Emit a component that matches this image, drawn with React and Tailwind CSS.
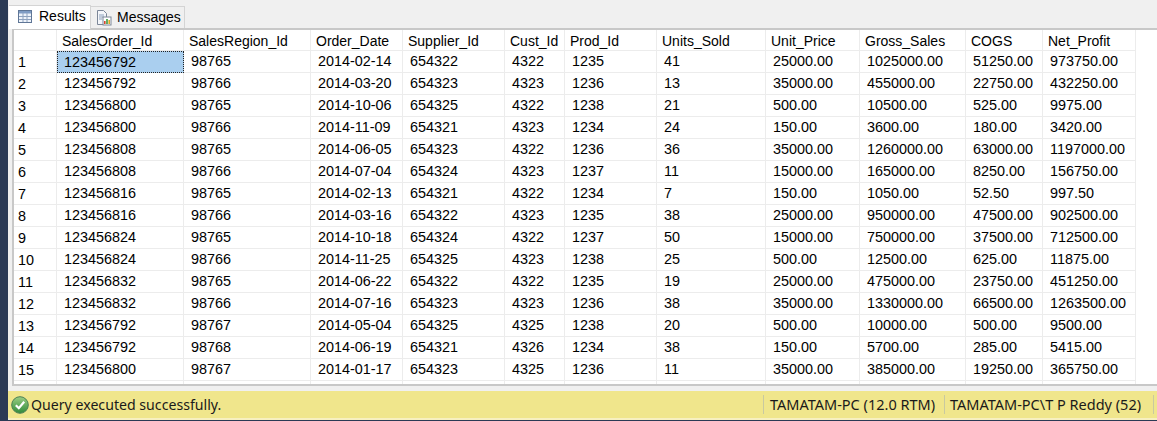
const columns = [
  { name: "", w: 43 },
  { name: "SalesOrder_Id", w: 127 },
  { name: "SalesRegion_Id", w: 127 },
  { name: "Order_Date", w: 92 },
  { name: "Supplier_Id", w: 102 },
  { name: "Cust_Id", w: 60 },
  { name: "Prod_Id", w: 92 },
  { name: "Units_Sold", w: 109 },
  { name: "Unit_Price", w: 94 },
  { name: "Gross_Sales", w: 106 },
  { name: "COGS", w: 77 },
  { name: "Net_Profit", w: 93 },
];

const rows = [
  ["123456792", "98765", "2014-02-14", "654322", "4322", "1235", "41", "25000.00", "1025000.00", "51250.00", "973750.00"],
  ["123456792", "98766", "2014-03-20", "654323", "4323", "1236", "13", "35000.00", "455000.00", "22750.00", "432250.00"],
  ["123456800", "98765", "2014-10-06", "654325", "4322", "1238", "21", "500.00", "10500.00", "525.00", "9975.00"],
  ["123456800", "98766", "2014-11-09", "654321", "4323", "1234", "24", "150.00", "3600.00", "180.00", "3420.00"],
  ["123456808", "98765", "2014-06-05", "654323", "4322", "1236", "36", "35000.00", "1260000.00", "63000.00", "1197000.00"],
  ["123456808", "98766", "2014-07-04", "654324", "4323", "1237", "11", "15000.00", "165000.00", "8250.00", "156750.00"],
  ["123456816", "98765", "2014-02-13", "654321", "4322", "1234", "7", "150.00", "1050.00", "52.50", "997.50"],
  ["123456816", "98766", "2014-03-16", "654322", "4323", "1235", "38", "25000.00", "950000.00", "47500.00", "902500.00"],
  ["123456824", "98765", "2014-10-18", "654324", "4322", "1237", "50", "15000.00", "750000.00", "37500.00", "712500.00"],
  ["123456824", "98766", "2014-11-25", "654325", "4323", "1238", "25", "500.00", "12500.00", "625.00", "11875.00"],
  ["123456832", "98765", "2014-06-22", "654322", "4322", "1235", "19", "25000.00", "475000.00", "23750.00", "451250.00"],
  ["123456832", "98766", "2014-07-16", "654323", "4323", "1236", "38", "35000.00", "1330000.00", "66500.00", "1263500.00"],
  ["123456792", "98767", "2014-05-04", "654325", "4325", "1238", "20", "500.00", "10000.00", "500.00", "9500.00"],
  ["123456792", "98768", "2014-06-19", "654321", "4326", "1234", "38", "150.00", "5700.00", "285.00", "5415.00"],
  ["123456800", "98767", "2014-01-17", "654323", "4325", "1236", "11", "35000.00", "385000.00", "19250.00", "365750.00"],
];

function GridIcon() {
  return (
    <svg width="14" height="13" viewBox="0 0 14 13" className="shrink-0">
      <rect x="0.5" y="0.5" width="13" height="12" fill="#eef3fa" stroke="#5f7696" />
      <rect x="1" y="1" width="12" height="2.5" fill="#7f9cc4" />
      <path d="M1 6.5h12M1 9.5h12M5 3v9M9 3v9" stroke="#8fa3bf" fill="none" />
    </svg>
  );
}

function MessagesIcon() {
  return (
    <svg width="16" height="17" viewBox="0 0 16 17" className="shrink-0">
      <path d="M1.5 1.5h6l3 3v11h-9z" fill="#f4f6fa" stroke="#7c8798" />
      <path d="M3 6h5M3 8h5M3 10h3" stroke="#8ea2bd" />
      <rect x="7" y="8" width="8" height="8" fill="#fff" stroke="#7c8798" />
      <rect x="8" y="12" width="1.6" height="3" fill="#d9482b" />
      <rect x="10.2" y="10" width="1.6" height="5" fill="#3b9a3f" />
      <rect x="12.4" y="11" width="1.6" height="4" fill="#e0a526" />
    </svg>
  );
}

function SuccessIcon() {
  return (
    <svg width="18" height="18" viewBox="0 0 18 18" className="shrink-0">
      <defs>
        <linearGradient id="ok" x1="0" y1="0" x2="0" y2="1">
          <stop offset="0" stopColor="#9ccf84" />
          <stop offset="1" stopColor="#2f8a3a" />
        </linearGradient>
      </defs>
      <circle cx="9" cy="9" r="8.3" fill="url(#ok)" stroke="#4a7f55" />
      <path d="M4.8 9.2l3 3 5.4-6.4" stroke="#fff" strokeWidth="2.2" fill="none" />
    </svg>
  );
}

function Row({ n, row, selected }) {
  return (
    <>
      <div className="h-[22px] pl-[4px] pt-[3px] flex items-center border-r border-b border-[#ececec]">{n}</div>
      {row.map((value, j) => (
        <div
          key={j}
          className={
            selected && j === 0
              ? "h-[22px] pl-[6px] pt-[1px] flex items-center bg-[#aacfef] border border-dotted border-[#222]"
              : "h-[22px] pl-[7px] pt-[1px] flex items-center border-r border-b border-[#ececec]"
          }
        >
          {value}
        </div>
      ))}
    </>
  );
}

export default function App() {
  const template = columns.map((c) => `${c.w}px`).join(" ");

  return (
    <div className="w-[1157px] h-[421px] overflow-hidden flex bg-[#2b3a55] font-['Liberation_Sans',Arial,sans-serif] text-[14.4px] text-black">
      <div className="w-[8px] shrink-0 bg-[#2b3a55]" />
      <div className="flex-1 min-w-0 flex flex-col h-[420px] bg-[#f0f0f0]">
        <div className="h-[28px] shrink-0 flex items-end pl-[1px] pt-[5px] text-[14px]">
          <div className="h-[24px] w-[82px] flex items-center gap-[7px] pl-[9px] pb-[2px] bg-white border-t border-r border-[#d4d4d4] relative z-10 mb-[-1px]">
            <GridIcon />
            <span>Results</span>
          </div>
          <div className="h-[22px] w-[94px] flex items-center gap-[5px] pl-[5px] bg-[#f0f0f0] border-t border-r border-[#d4d4d4]">
            <MessagesIcon />
            <span>Messages</span>
          </div>
        </div>

        <div className="h-[358px] ml-[4px] shrink-0 bg-white border-2 border-r-0 border-[#c8c8c8] overflow-hidden">
          <div className="grid" style={{ gridTemplateColumns: template }}>
            {columns.map((c) => (
              <div key={c.name} className="h-[21px] pl-[5px] pt-[2px] text-[14px] flex items-center border-r border-b border-[#ececec]">
                {c.name}
              </div>
            ))}
            {rows.map((row, i) => (
              <Row key={i} n={i + 1} row={row} selected={i === 0} />
            ))}
            {columns.map((c) => (
              <div key={c.name} className="h-[22px] border-r border-[#ececec]" />
            ))}
          </div>
        </div>

        <div className="mt-[5px] h-[29px] shrink-0 bg-[#f0e68c] border-b-2 border-[#f7f0c0] rounded-bl-[3px] flex items-center pl-[3px] font-['Noto_Sans',sans-serif] text-[14.15px] text-[#1a1a1a]">
          <SuccessIcon />
          <span className="ml-[2px] flex-1">Query executed successfully.</span>
          <span className="border-l border-[#c9c9a0] h-[19px] flex items-center pl-[6px] w-[181px] text-[14.5px]">TAMATAM-PC (12.0 RTM)</span>
          <span className="border-l border-[#c9c9a0] h-[19px] flex items-center pl-[5px] w-[209px] text-[14.5px]">TAMATAM-PC\T P Reddy (52)</span>
          <span className="border-l border-[#c9c9a0] h-[19px] w-[4px]" />
        </div>
      </div>
    </div>
  );
}
